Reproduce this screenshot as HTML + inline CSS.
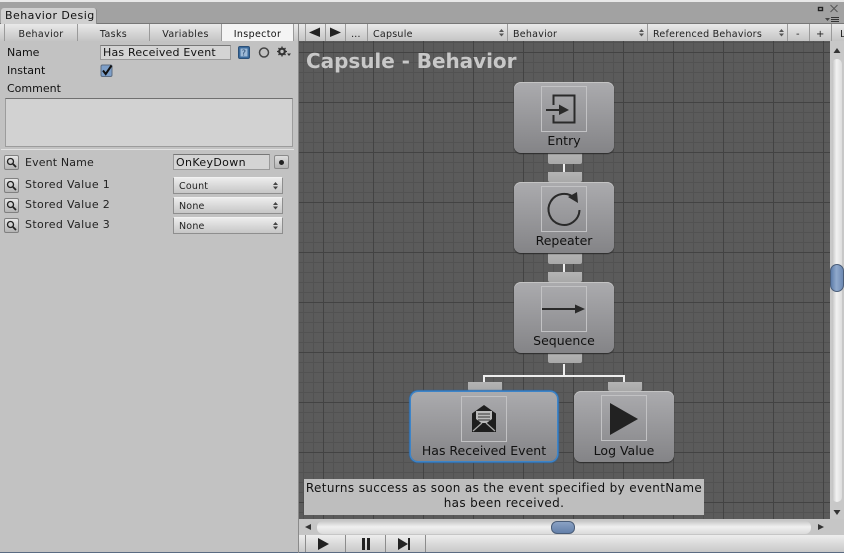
<!DOCTYPE html>
<html><head><meta charset="utf-8">
<style>
*{box-sizing:border-box}
html,body{margin:0;padding:0;width:844px;height:553px;overflow:hidden;background:#c2c2c2;font-family:"DejaVu Sans",sans-serif;font-size:11px;color:#111}
div,span{position:absolute;white-space:nowrap}
.t{line-height:14px;height:14px}
.tb{top:24px;height:17px;background:linear-gradient(#e9e9e9,#c4c4c4);border-right:1px solid #9a9a9a;text-align:center;line-height:22px;font-size:9.5px;letter-spacing:.35px;color:#222}
.pop{height:17px;left:173px;width:110px;background:linear-gradient(#ececec,#c6c6c6);border:1px solid #8e8e8e;border-top-color:#f2f2f2;font-size:9.5px;letter-spacing:.2px;line-height:18px;padding-left:5px;color:#222}
.arr{right:4px;top:3px;width:5px;height:9px}
.lens{left:4px;width:15px;height:15px;background:linear-gradient(#e6e6e6,#b4b4b4);border:1px solid #808080;border-radius:2px}
.node{background:linear-gradient(#ababae,#848487);border-radius:7px;box-shadow:0 1px 1px #2a2a2a,inset 0 1px 0 #c4c4c4;width:100px;height:71px}
.tab{background:linear-gradient(#b4b4b4,#a8a8a8);width:34px;border-radius:0 0 2px 2px}
.ic{left:27px;top:4px;width:46px;height:46px;border:1px solid #c2c2c4}
.lbl{left:0;right:0;top:51px;text-align:center;font-size:12.5px;line-height:15px;color:#111}
.w{background:#eee}
svg{position:absolute;overflow:visible}
</style></head><body>
<!-- top chrome -->
<div style="left:0;top:0;width:844px;height:2px;background:#e8e8e8"></div>
<div style="left:0;top:2px;width:844px;height:21px;background:#a2a2a2"></div>
<div style="left:0;top:23px;width:844px;height:1px;background:#777"></div>
<div style="left:1px;top:8px;width:96px;height:16px;background:#d0d0d0;border-radius:3px 3px 0 0;border-right:1px solid #8a8a8a;font-size:11px;letter-spacing:.45px;line-height:16px;padding-left:4px;color:#111">Behavior Desig</div>
<svg style="left:815px;top:3px" width="29" height="20"><rect x="3.500" y="4.500" width="4" height="3" fill="none" stroke="#222" stroke-width="1.400"/><path d="M15.500 2L22.500 9M22.500 2L15.500 9" stroke="#555" fill="none"/><path d="M10 15h5l-2.500 3z" fill="#444"/><path d="M16 14.500h8M16 16.500h8M16 18.500h8" stroke="#333"/></svg>

<!-- left tabs -->
<div style="left:0;top:24px;width:5px;height:17px;background:linear-gradient(#e9e9e9,#c4c4c4);border-right:1px solid #9a9a9a"></div>
<div class="tb" style="left:5px;width:73px">Behavior</div>
<div class="tb" style="left:78px;width:72px">Tasks</div>
<div class="tb" style="left:150px;width:72px">Variables</div>
<div class="tb" style="left:222px;width:72px;background:#f4f4f4;color:#111">Inspector</div>
<div style="left:294px;top:24px;width:5px;height:17px;background:linear-gradient(#e9e9e9,#c4c4c4)"></div>

<div class="t" style="left:7px;top:46px">Name</div>
<div style="left:100px;top:45px;width:131px;height:15px;background:#d4d4d4;border:1px solid #9a9a9a;border-top-color:#777;line-height:13px;padding-left:2px;letter-spacing:.2px">Has Received Event</div>
<svg style="left:238px;top:45px" width="56" height="15"><rect x="0.500" y="1.500" width="11" height="12" rx="1.500" fill="#3a6a9c" stroke="#2b5078"/><rect x="2.500" y="3.500" width="7" height="8" fill="#9db9d6"/><text x="3.700" y="10.500" font-size="8" font-family="DejaVu Sans" fill="#1e3f66">?</text><circle cx="26" cy="7.500" r="4.500" fill="none" stroke="#444" stroke-width="1.500"/><circle cx="44" cy="6.500" r="2.800" fill="none" stroke="#333" stroke-width="2.200"/><path d="M44 1.500v2M44 9.500v2M39 6.500h2M47 6.500h2M40.500 3l1.400 1.400M46.100 8.600l1.400 1.400M40.500 10l1.400-1.400M46.100 4.400l1.400-1.400" stroke="#333" stroke-width="1.300"/><path d="M49 8.500h4l-2 2.500z" fill="#333"/></svg>
<div class="t" style="left:7px;top:64px">Instant</div>
<svg style="left:100px;top:64px" width="14" height="14"><rect x="1" y="1" width="11" height="11.500" rx="1.500" fill="#7d9fc9" stroke="#5d6d82"/><path d="M3 6.500l2.700 3.500L11.500 1.500" stroke="#111" stroke-width="2" fill="none"/></svg>
<div class="t" style="left:7px;top:82px">Comment</div>
<div style="left:5px;top:98px;width:288px;height:49px;background:#d2d2d2;border:1px solid #9c9c9c;border-top-color:#707070"></div>
<div style="left:1px;top:149px;width:293px;height:1px;background:#e2e2e2"></div>

<div class="lens" style="top:155px"></div>
<div class="lens" style="top:178px"></div>
<div class="lens" style="top:198px"></div>
<div class="lens" style="top:218px"></div>
<svg style="left:4px;top:155px" width="15" height="80"><g fill="none" stroke="#222" stroke-width="1.300"><circle cx="6.500" cy="6.500" r="3"/><path d="M9 9l3 3" stroke-width="1.800"/><circle cx="6.500" cy="29.500" r="3"/><path d="M9 32l3 3" stroke-width="1.800"/><circle cx="6.500" cy="49.500" r="3"/><path d="M9 52l3 3" stroke-width="1.800"/><circle cx="6.500" cy="69.500" r="3"/><path d="M9 72l3 3" stroke-width="1.800"/></g></svg>
<div class="t" style="left:25px;top:156px;letter-spacing:.15px;color:#222">Event Name</div>
<div class="t" style="left:25px;top:178px;letter-spacing:.35px;color:#222">Stored Value 1</div>
<div class="t" style="left:25px;top:198px;letter-spacing:.35px;color:#222">Stored Value 2</div>
<div class="t" style="left:25px;top:218px;letter-spacing:.35px;color:#222">Stored Value 3</div>
<div style="left:173px;top:154px;width:97px;height:16px;background:#d4d4d4;border:1px solid #9a9a9a;border-top-color:#777;line-height:15px;padding-left:2px;letter-spacing:.35px">OnKeyDown</div>
<div style="left:274px;top:155px;width:15px;height:14px;background:linear-gradient(#dedede,#b4b4b4);border:1px solid #8a8a8a;border-radius:2px"></div>
<div style="left:279px;top:160px;width:5px;height:5px;border-radius:50%;background:#222"></div>
<div class="pop" style="top:177px">Count<svg class="arr" viewBox="0 0 5 9"><path d="M0 4L2.500 1L5 4zM0 5.500L2.500 8.500L5 5.500z" fill="#444"/></svg></div>
<div class="pop" style="top:197px">None<svg class="arr" viewBox="0 0 5 9"><path d="M0 4L2.500 1L5 4zM0 5.500L2.500 8.500L5 5.500z" fill="#444"/></svg></div>
<div class="pop" style="top:217px">None<svg class="arr" viewBox="0 0 5 9"><path d="M0 4L2.500 1L5 4zM0 5.500L2.500 8.500L5 5.500z" fill="#444"/></svg></div>

<!-- graph -->
<div id="g" style="left:299px;top:41px;width:531px;height:478px;background-color:#5b5b5b;background-image:linear-gradient(90deg,#434343 1px,transparent 1px),linear-gradient(#434343 1px,transparent 1px),linear-gradient(90deg,#525252 1px,transparent 1px),linear-gradient(#525252 1px,transparent 1px);background-size:50px 50px,50px 50px,10px 10px,10px 10px;background-position:24px 11px,24px 11px,4px 1px,4px 1px"></div>
<div style="left:306px;top:49px;font-size:20px;font-weight:bold;letter-spacing:-.05px;line-height:25px;color:#c8c8c8">Capsule - Behavior</div>

<!-- connectors -->
<div class="w" style="left:563px;top:164px;width:2px;height:10px"></div>
<div class="w" style="left:563px;top:264px;width:2px;height:10px"></div>
<div class="w" style="left:563px;top:364px;width:2px;height:13px"></div>
<div class="w" style="left:483px;top:375px;width:142px;height:2px"></div>
<div class="w" style="left:483px;top:375px;width:2px;height:7px"></div>
<div class="w" style="left:623px;top:375px;width:2px;height:7px"></div>

<div class="tab" style="left:548px;top:172px;height:10px"></div>
<div class="tab" style="left:548px;top:272px;height:10px"></div>
<div class="tab" style="left:468px;top:382px;height:9px"></div>
<div class="tab" style="left:608px;top:382px;height:9px"></div>
<div class="tab" style="left:548px;top:153px;height:11px"></div>
<div class="tab" style="left:548px;top:253px;height:11px"></div>
<div class="tab" style="left:548px;top:353px;height:10px"></div>

<div class="node" style="left:514px;top:82px"><div class="ic"></div><div class="lbl">Entry</div>
<svg style="left:27px;top:5px" width="46" height="46"><path d="M12.500 18V8.500H33.500V35.500H12.500V28" fill="none" stroke="#2a2a2a" stroke-width="2"/><path d="M5 23H20" stroke="#2a2a2a" stroke-width="2"/><path d="M18 17.500L28 23L18 28z" fill="#2a2a2a"/></svg></div>
<div class="node" style="left:514px;top:182px"><div class="ic"></div><div class="lbl">Repeater</div>
<svg style="left:27px;top:5px" width="46" height="46"><path d="M34 11.500A15.500 15.500 0 1 0 38.500 23" fill="none" stroke="#2a2a2a" stroke-width="2"/><path d="M27 10L36 5L37 16z" fill="#2a2a2a"/></svg></div>
<div class="node" style="left:514px;top:282px"><div class="ic"></div><div class="lbl">Sequence</div>
<svg style="left:27px;top:5px" width="46" height="46"><path d="M1 22H35" stroke="#2a2a2a" stroke-width="2"/><path d="M34 17.500L44 22L34 26.500z" fill="#2a2a2a"/></svg></div>
<div class="node" style="left:411px;top:392px;width:146px;height:69px;box-shadow:0 0 0 1.500px #3c84c8,0 0 1px 2px #2c64a0"><div class="ic" style="left:50px"></div><div class="lbl" style="top:51px">Has Received Event</div>
<svg style="left:50px;top:4px" width="46" height="46"><path d="M11 17.500L23 9L35 17.500V36H11z" fill="#1e1e1e"/><rect x="15" y="15" width="16" height="12" fill="#bbb"/><path d="M17 18h12M17 21h12M17 24h12" stroke="#333"/><path d="M11 20L23 29L35 20V36H11z" fill="#1e1e1e"/><path d="M12 35L21 27M34 35L25 27" stroke="#aaa" stroke-width="1.200"/></svg></div>
<div class="node" style="left:574px;top:391px"><div class="ic"></div><div class="lbl" style="top:52px">Log Value</div>
<svg style="left:27px;top:5px" width="46" height="46"><path d="M9 7L37 23L9 39z" fill="#222"/></svg></div>

<div style="left:304px;top:479px;width:400px;height:36px;background:#bebebe;font-size:12px;line-height:14.500px;text-align:center;white-space:nowrap;padding-top:2px;color:#111;letter-spacing:.36px">Returns success as soon as the event specified by eventName<br>has been received.</div>

<!-- right scrollbar -->
<div style="left:830px;top:41px;width:14px;height:478px;background:#c8c8c8"></div>
<div style="left:832px;top:59px;width:10px;height:443px;border-radius:5px;background:linear-gradient(90deg,#c0c0c0,#f2f2f2 45%,#dcdcdc)"></div>
<svg style="left:830px;top:41px" width="14" height="478"><path d="M3.500 12L7 7L10.500 12z" fill="#333"/><path d="M3.500 469L7 474L10.500 469z" fill="#333"/></svg>
<div style="left:830px;top:264px;width:14px;height:28px;border-radius:7px;background:linear-gradient(90deg,#5d7ca8,#90a9cc 45%,#6d89b2);border:1px solid #4a5d78"></div>

<!-- bottom scrollbar -->
<div style="left:299px;top:519px;width:545px;height:16px;background:#c6c6c6"></div>
<div style="left:317px;top:521px;width:494px;height:13px;border-radius:6px;background:linear-gradient(#c8c8c8,#f0f0f0 45%,#dadada)"></div>
<svg style="left:299px;top:519px" width="545" height="16"><path d="M12 5V11L6 8z" fill="#333"/><path d="M519 5V11L525 8z" fill="#333"/></svg>
<div style="left:551px;top:521px;width:24px;height:13px;border-radius:6px;background:linear-gradient(#8aa1c4,#6480aa);border:1px solid #4a5d78"></div>

<!-- bottom toolbar -->
<div style="left:299px;top:535px;width:545px;height:17px;background:linear-gradient(#ededed,#c8c8c8)"></div>
<div style="left:305px;top:535px;width:1px;height:17px;background:#8c8c8c"></div>
<div style="left:345px;top:535px;width:1px;height:17px;background:#8c8c8c"></div>
<div style="left:385px;top:535px;width:1px;height:17px;background:#8c8c8c"></div>
<div style="left:425px;top:535px;width:1px;height:17px;background:#8c8c8c"></div>
<svg style="left:299px;top:535px" width="130" height="18"><path d="M19 3V15L30 9z" fill="#222"/><rect x="63" y="3" width="3" height="12" fill="#222"/><rect x="68" y="3" width="3" height="12" fill="#222"/><path d="M99 3V15L109 9z" fill="#222"/><rect x="109" y="3" width="2" height="12" fill="#222"/></svg>
<div style="left:0;top:552px;width:844px;height:1px;background:#5a6b82"></div>

<!-- right toolbar -->
<div style="left:299px;top:24px;width:545px;height:17px;background:linear-gradient(#e9e9e9,#c4c4c4)"></div>
<div style="left:305px;top:24px;width:1px;height:17px;background:#9a9a9a"></div>
<div style="left:325px;top:24px;width:1px;height:17px;background:#9a9a9a"></div>
<div style="left:345px;top:24px;width:1px;height:17px;background:#9a9a9a"></div>
<div style="left:367px;top:24px;width:1px;height:17px;background:#9a9a9a"></div>
<div style="left:507px;top:24px;width:1px;height:17px;background:#9a9a9a"></div>
<div style="left:647px;top:24px;width:1px;height:17px;background:#9a9a9a"></div>
<div style="left:787px;top:24px;width:1px;height:17px;background:#9a9a9a"></div>
<div style="left:809px;top:24px;width:1px;height:17px;background:#9a9a9a"></div>
<div style="left:831px;top:24px;width:1px;height:17px;background:#9a9a9a"></div>
<svg style="left:299px;top:24px" width="545" height="17"><path d="M21 3.500V13L10 8.500z" fill="#222"/><path d="M31 3.500V13L42 8.500z" fill="#222"/><g fill="#555"><path d="M200 8L202.500 5L205 8zM200 9.500L202.500 12.500L205 9.500z"/><path d="M340 8L342.500 5L345 8zM340 9.500L342.500 12.500L345 9.500z"/><path d="M480 8L482.500 5L485 8zM480 9.500L482.500 12.500L485 9.500z"/></g></svg>
<div class="t" style="left:351px;top:28px;font-size:10px;color:#222">...</div>
<div class="t" style="left:373px;top:28px;font-size:9.500px;letter-spacing:.25px;color:#222">Capsule</div>
<div class="t" style="left:513px;top:28px;font-size:9.500px;letter-spacing:.25px;color:#222">Behavior</div>
<div class="t" style="left:653px;top:28px;font-size:9.500px;letter-spacing:.25px;color:#222">Referenced Behaviors</div>
<div class="t" style="left:796px;top:28px;font-size:10px;color:#222">-</div>
<div class="t" style="left:816px;top:28px;font-size:10px;color:#222">+</div>
<div class="t" style="left:840px;top:28px;font-size:10px;color:#222">L</div>
<div style="left:298px;top:24px;width:1px;height:529px;background:#8a8a8a"></div>
</body></html>
